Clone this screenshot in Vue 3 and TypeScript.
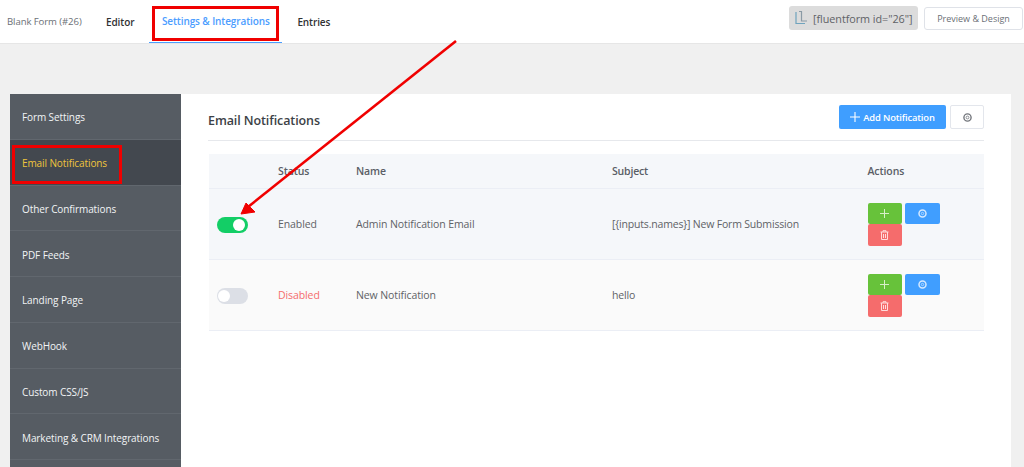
<script setup lang="ts">
interface Row { enabled: boolean; name: string; subject: string }
const menu: string[] = ['Form Settings', 'Email Notifications', 'Other Confirmations', 'PDF Feeds', 'Landing Page', 'WebHook', 'Custom CSS/JS', 'Marketing & CRM Integrations']
const rows: Row[] = [
  { enabled: true, name: 'Admin Notification Email', subject: '[{inputs.names}] New Form Submission' },
  { enabled: false, name: 'New Notification', subject: 'hello' },
]
</script>

<template>
  <div class="page">
    <header class="top">
      <span class="form-name">Blank Form (#26)</span>
      <nav class="tabs">
        <a class="tab">Editor</a>
        <a class="tab active">Settings &amp; Integrations</a>
        <a class="tab">Entries</a>
      </nav>
      <div class="top-right">
        <div class="code">
          <svg width="16" height="16" viewBox="0 0 16 16" fill="none" stroke-width="1.2"><path d="M3 2v11.5h9" stroke="#6fa3bd"/><path d="M6 1.5h2.5v9.5H14" stroke="#8a9aa5"/></svg>
          <span>[fluentform id="26"]</span>
        </div>
        <button class="preview">Preview &amp; Design</button>
      </div>
    </header>

    <div class="body">
      <aside class="side">
        <a v-for="(m, i) in menu" :key="m" class="side-item" :class="{ on: i === 1 }">{{ m }}</a>
      </aside>
      <main class="panel">
        <div class="panel-head">
          <h2>Email Notifications</h2>
          <div class="head-btns">
            <button class="add">
              <svg width="10" height="10" viewBox="0 0 10 10"><path d="M5 0v10M0 5h10" stroke="#fff" stroke-width="1.1"/></svg>
              Add Notification
            </button>
            <button class="gear-btn">
              <svg width="9" height="9" viewBox="0 0 9 9" fill="none" stroke="#74777d" stroke-width="1.4"><circle cx="4.5" cy="4.5" r="3.6"/><circle cx="4.5" cy="4.5" r="1.4" stroke-width="0.8"/></svg>
            </button>
          </div>
        </div>
        <div class="table">
          <div class="tr th">
            <div class="c1"></div><div class="c2">Status</div><div class="c3">Name</div><div class="c4">Subject</div><div class="c5">Actions</div>
          </div>
          <div v-for="r in rows" :key="r.name" class="tr td">
            <div class="c1"><span class="switch" :class="{ on: r.enabled }"><i></i></span></div>
            <div class="c2" :class="{ off: !r.enabled }">{{ r.enabled ? 'Enabled' : 'Disabled' }}</div>
            <div class="c3">{{ r.name }}</div>
            <div class="c4">{{ r.subject }}</div>
            <div class="c5 actions">
              <button class="act green">
                <svg width="9" height="9" viewBox="0 0 9 9"><path d="M4.5 0v9M0 4.5h9" stroke="#d7efc8" stroke-width="1"/></svg>
              </button>
              <button class="act blue">
                <svg width="9" height="9" viewBox="0 0 9 9" fill="none" stroke="#d5e9ff" stroke-width="1.5"><circle cx="4.5" cy="4.5" r="3.5"/><circle cx="4.5" cy="4.5" r="1.2" stroke-width="0.7"/></svg>
              </button>
              <button class="act red">
                <svg width="9" height="10" viewBox="0 0 9 10" fill="none" stroke="#ffdcdc" stroke-width="1"><path d="M0.5 2h8M3 2V.7h3V2M1.5 2v7.5h6V2M3.5 4v4M5.5 4v4"/></svg>
              </button>
            </div>
          </div>
        </div>
      </main>
    </div>

    <div class="mark mark-tab"></div>
    <div class="mark mark-side"></div>
    <svg class="arrow" width="1024" height="467" viewBox="0 0 1024 467">
      <path d="M456 41L248 207" stroke="#f00000" stroke-width="2.6" fill="none"/>
      <path d="M241 214L246 203L255 212Z" fill="#f00000" stroke="#f00000" stroke-width="1"/>
    </svg>
  </div>
</template>

<style>
html, body { margin: 0; padding: 0; }
</style>

<style scoped>
.page {
  position: relative;
  width: 1024px;
  height: 467px;
  overflow: hidden;
  background: #f0f0f0;
  font-family: "Open Sans", "Noto Sans", sans-serif;
  font-size: 10.5px;
  color: #606266;
}
.top {
  height: 44px;
  box-sizing: border-box;
  background: #fff;
  border-bottom: 1px solid #e6e6e6;
  display: flex;
  align-items: center;
  padding-left: 7px;
}
.form-name { font-size: 9.6px; color: #6b6f76; width: 81px; letter-spacing: -0.1px; white-space: nowrap; }
.tabs { display: flex; align-items: stretch; height: 43px; margin-left: 18px; }
.tab {
  display: flex;
  align-items: center;
  font-size: 10px;
  font-weight: 600;
  color: #303133;
  padding: 0;
  margin-right: 15px;
  letter-spacing: -0.1px;
  white-space: nowrap;
  box-sizing: border-box;
}
.tab.active { color: #4b9dff; width: 133px; justify-content: center; border-bottom: 1.5px solid #4b9dff; }
.top-right { margin-left: auto; display: flex; align-items: center; gap: 6px; padding-right: 1px; margin-top: -7px; }
.code {
  width: 129px;
  height: 24px;
  box-sizing: border-box;
  background: #dcdcdc;
  border-radius: 3px;
  display: flex;
  align-items: center;
  gap: 4px;
  padding-left: 4px;
  font-size: 10.8px;
  letter-spacing: -0.05px;
  color: #606266;
  white-space: nowrap;
}
.preview {
  width: 99px;
  height: 23px;
  padding: 0;
  background: #fff;
  border: 1px solid #dfe2e8;
  border-radius: 3px;
  font: inherit;
  font-size: 9px;
  color: #6b6f76;
  white-space: nowrap;
}
.body { display: flex; padding: 50px 13px 0 10px; height: 423px; box-sizing: border-box; }
.side {
  width: 171px;
  flex: none;
  background: #565c63;
  display: flex;
  flex-direction: column;
  height: 373px;
  overflow: hidden;
}
.side-item {
  height: 45.75px;
  flex: none;
  box-sizing: border-box;
  display: flex;
  align-items: center;
  padding: 2px 0 0 12px;
  font-size: 10px;
  letter-spacing: -0.1px;
  color: #f2f4f6;
  border-bottom: 1px solid #61676e;
  white-space: nowrap;
}
.side-item.on { background: #43484f; color: #f0c53c; }
.panel { flex: 1; background: #fff; padding: 0 27px; height: 373px; }
.panel-head {
  height: 47px;
  border-bottom: 1px solid #e6e8ec;
  display: flex;
  align-items: center;
  justify-content: space-between;
  box-sizing: border-box;
}
.panel-head h2 { margin: 6px 0 0; font-size: 12.5px; font-weight: 600; color: #3c4146; letter-spacing: -0.1px; }
.head-btns { display: flex; gap: 4px; }
.add {
  width: 107px;
  height: 24px;
  padding: 0;
  border: 0;
  border-radius: 2px;
  background: #3f9eff;
  color: #fff;
  font: inherit;
  font-size: 9.4px;
  font-weight: 600;
  letter-spacing: -0.15px;
  white-space: nowrap;
  display: flex;
  align-items: center;
  justify-content: center;
  gap: 3px;
}
.gear-btn {
  width: 34px;
  height: 24px;
  padding: 0;
  background: #fff;
  border: 1px solid #e3e6ec;
  border-radius: 2px;
  display: flex;
  align-items: center;
  justify-content: center;
}
.table { margin-top: 13px; margin-left: 1px; }
.tr { display: flex; align-items: center; border-bottom: 1px solid #ebeef5; box-sizing: border-box; font-size: 10.5px; letter-spacing: -0.1px; white-space: nowrap; }
.th { height: 35px; background: #f5f7fa; font-weight: 600; color: #5a5e66; }
.td { height: 71px; background: #fafafa; }
.td:nth-child(2) { background: #f5f7fa; }
.c1 { width: 69px; padding: 2px 0 0 8px; box-sizing: border-box; display: flex; }
.c2 { width: 78px; }
.c2.off { color: #f56c6c; }
.c3 { width: 256px; }
.c4 { width: 255.5px; letter-spacing: -0.18px; }
.c5 { flex: 1; }
.switch { width: 31px; height: 16px; border-radius: 8px; background: #dcdfe6; position: relative; display: block; }
.switch.on { background: #13ce66; }
.switch i { position: absolute; top: 2px; left: 1px; width: 12px; height: 12px; border-radius: 50%; background: #fff; }
.switch.on i { left: 16px; }
.actions { display: flex; flex-wrap: wrap; gap: 0 3px; width: 116px; }
.act { height: 21.5px; padding: 0; border: 0; border-radius: 2px; display: flex; align-items: center; justify-content: center; }
.green { width: 34px; background: #67c23a; }
.blue { width: 35px; background: #409eff; }
.red { width: 34px; background: #f56c6c; flex: none; margin-right: 40px; }
.mark { position: absolute; border: 3px solid #f00000; box-sizing: border-box; }
.mark-tab { left: 152px; top: 6px; width: 127px; height: 35px; }
.mark-side { left: 12px; top: 145px; width: 110px; height: 39px; }
.arrow { position: absolute; left: 0; top: 0; pointer-events: none; }
</style>
